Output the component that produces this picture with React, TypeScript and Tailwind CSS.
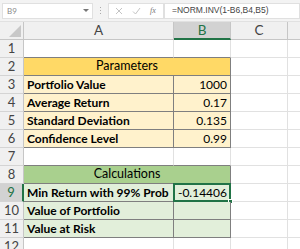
import React from 'react'

type Cell = {
  a?: string
  b?: string
  fill?: string
  merged?: boolean
  table?: 'yellow' | 'green'
}

const rows: Cell[] = [
  {},
  { a: 'Parameters', merged: true, fill: 'bg-[#ffd966]', table: 'yellow' },
  { a: 'Portfolio Value', b: '1000', fill: 'bg-[#fff2cc]', table: 'yellow' },
  { a: 'Average Return', b: '0.17', fill: 'bg-[#fff2cc]', table: 'yellow' },
  { a: 'Standard Deviation', b: '0.135', fill: 'bg-[#fff2cc]', table: 'yellow' },
  { a: 'Confidence Level', b: '0.99', fill: 'bg-[#fff2cc]', table: 'yellow' },
  {},
  { a: 'Calculations', merged: true, fill: 'bg-[#a9d08e]', table: 'green' },
  { a: 'Min Return with 99% Prob', b: '-0.14406', fill: 'bg-[#e2efda]', table: 'green' },
  { a: 'Value of Portfolio', b: '', fill: 'bg-[#e2efda]', table: 'green' },
  { a: 'Value at Risk', b: '', fill: 'bg-[#e2efda]', table: 'green' },
  {},
]

const font = { fontFamily: 'Lato, Carlito, "Liberation Sans", sans-serif' }

export default function App() {
  return (
    <div className="w-[300px] h-[249px] overflow-hidden bg-white text-[13px] text-black" style={font}>
      {/* Formula bar */}
      <div className="h-[22px] flex items-center bg-[#f3f3f3] border-b border-[#e1e1e1]">
        <div className="ml-[2px] w-[91px] h-[16px] bg-white border border-[#e0e0e0] flex items-center justify-between pl-[4px] pr-[3px]">
          <span className="text-[8px] text-[#8a8a8a]">B9</span>
          <span className="w-0 h-0 border-l-[3px] border-r-[3px] border-t-[3px] border-l-transparent border-r-transparent border-t-[#777]" />
        </div>
        <div className="w-[15px] flex flex-col items-center gap-[2px]">
          <span className="w-[1px] h-[1px] bg-[#aaa]" />
          <span className="w-[1px] h-[1px] bg-[#aaa]" />
          <span className="w-[1px] h-[1px] bg-[#aaa]" />
        </div>
        <div className="h-[16px] w-[56px] bg-white border border-[#e0e0e0] flex items-center gap-[9px] pl-[6px]">
          <svg width="8" height="8" viewBox="0 0 8 8"><path d="M1 1L7 7M7 1L1 7" stroke="#c4c4c4" strokeWidth="1" /></svg>
          <svg width="9" height="8" viewBox="0 0 9 8"><path d="M1 4.5L3.5 7L8 1" stroke="#c4c4c4" strokeWidth="1" fill="none" /></svg>
          <span className="text-[8px] italic text-[#777]" style={{ fontFamily: '"Liberation Serif", serif' }}>fx</span>
        </div>
        <div className="flex-1 h-[16px] bg-white border border-[#e0e0e0] flex items-center pl-[7px]">
          <span className="text-[8.5px] text-[#444]" style={{ fontFamily: '"Liberation Sans", sans-serif' }}>=NORM.INV(1-B6,B4,B5)</span>
        </div>
      </div>

      {/* Column headers */}
      <div className="flex h-[18px] bg-[#f0f0f0] text-[#444] text-[13.5px]">
        <div className="w-[24px] shrink-0 border-r border-b border-[#c6c6c6] flex items-end justify-end p-[2px]">
          <svg width="12" height="12" viewBox="0 0 12 12"><path d="M12 0L12 12L0 12Z" fill="#c8c8c8" /></svg>
        </div>
        <div className="w-[150px] shrink-0 border-r border-b border-[#c6c6c6] flex items-center justify-center">A</div>
        <div className="w-[57px] shrink-0 border-r border-[#c6c6c6] border-b-2 border-b-[#217346] bg-[#d2d2d2] text-[#217346] flex items-center justify-center">B</div>
        <div className="w-[57px] shrink-0 border-r border-b border-[#c6c6c6] flex items-center justify-center">C</div>
        <div className="flex-1 border-b border-[#c6c6c6]" />
      </div>

      {/* Grid rows */}
      {rows.map((r, i) => {
        const n = i + 1
        const next = rows[i + 1]
        const selRow = n === 9
        const inTable = !!r.table
        const bottomDark = inTable || !!next?.table
        const tableBorder = 'border-[#7f7f7f]'
        const plain = bottomDark ? 'border-b-[#7f7f7f] border-r-[#e1e1e1]' : 'border-[#e1e1e1]'
        return (
          <div key={n} className="flex h-[18px]">
            <div
              className={`w-[24px] shrink-0 border-b border-[#d4d4d4] flex items-center justify-center text-[13px] ${
                selRow ? 'bg-[#d2d2d2] text-[#217346] border-r-2 border-r-[#217346]' : 'bg-[#f0f0f0] text-[#444] border-r border-r-[#c6c6c6]'
              }`}
            >
              {n}
            </div>
            {r.merged ? (
              <div className={`w-[207px] shrink-0 border-b border-r ${tableBorder} ${r.fill} flex items-center justify-center text-[12.5px]`}>
                {r.a}
              </div>
            ) : (
              <>
                <div
                  className={`w-[150px] shrink-0 border-b border-r flex items-center pl-[3px] overflow-hidden whitespace-nowrap font-bold text-[12px] ${
                    inTable ? `${tableBorder} ${r.fill}` : plain
                  }`}
                >
                  {r.a}
                </div>
                <div
                  className={`relative w-[57px] shrink-0 border-b border-r flex items-center justify-end pr-[3px] whitespace-nowrap text-[12px] ${
                    inTable ? `${tableBorder} ${r.fill}` : plain
                  }`}
                >
                  {r.b}
                  {selRow && (
                    <>
                      <span className="absolute -left-[1px] -top-[1px] -right-[1px] -bottom-[1px] border-2 border-[#217346]" />
                      <span className="absolute -right-[3px] -bottom-[3px] w-[5px] h-[5px] bg-[#217346] border border-white" />
                    </>
                  )}
                </div>
              </>
            )}
            <div className="w-[57px] shrink-0 border-b border-r border-[#e1e1e1]" />
            <div className="flex-1 border-b border-[#e1e1e1]" />
          </div>
        )
      })}
    </div>
  )
}
